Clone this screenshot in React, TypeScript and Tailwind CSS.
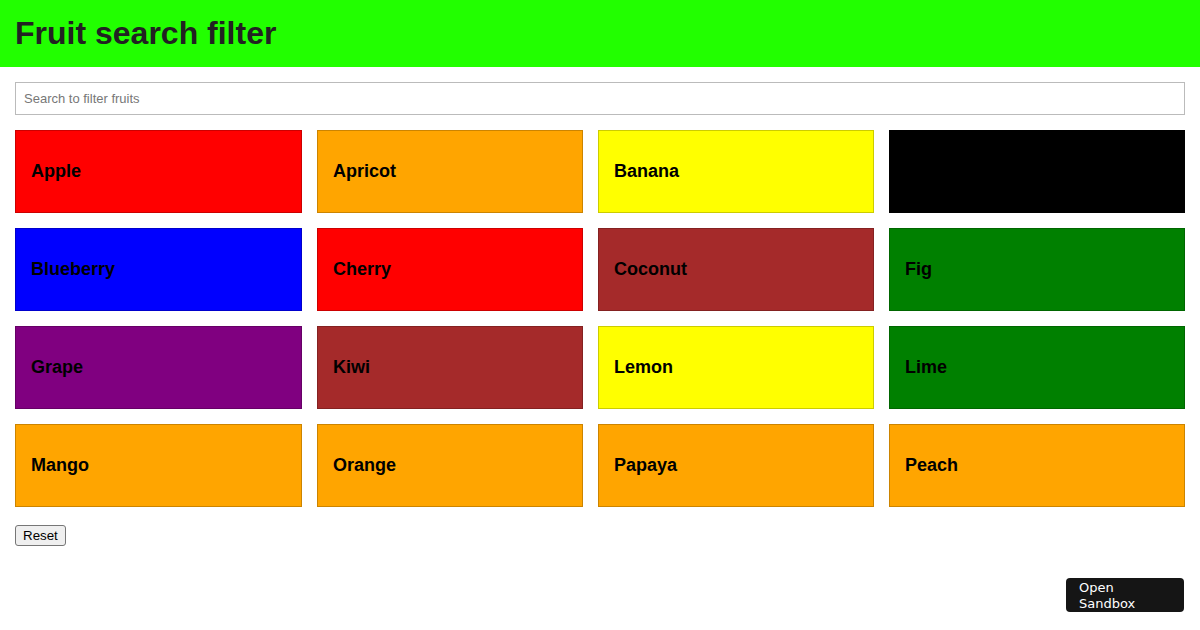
const fruits: { name: string; color: string }[] = [
  { name: 'Apple', color: 'bg-[#ff0000]' },
  { name: 'Apricot', color: 'bg-[#ffa500]' },
  { name: 'Banana', color: 'bg-[#ffff00]' },
  { name: 'Blackberry', color: 'bg-[#000000]' },
  { name: 'Blueberry', color: 'bg-[#0000ff]' },
  { name: 'Cherry', color: 'bg-[#ff0000]' },
  { name: 'Coconut', color: 'bg-[#a52a2a]' },
  { name: 'Fig', color: 'bg-[#008000]' },
  { name: 'Grape', color: 'bg-[#800080]' },
  { name: 'Kiwi', color: 'bg-[#a52a2a]' },
  { name: 'Lemon', color: 'bg-[#ffff00]' },
  { name: 'Lime', color: 'bg-[#008000]' },
  { name: 'Mango', color: 'bg-[#ffa500]' },
  { name: 'Orange', color: 'bg-[#ffa500]' },
  { name: 'Papaya', color: 'bg-[#ffa500]' },
  { name: 'Peach', color: 'bg-[#ffa500]' },
];

export default function App() {
  return (
    <div className="relative h-[630px] w-[1200px] bg-white font-['Liberation_Sans',Arial,sans-serif] text-black">
      <header className="bg-[#22ff00] px-[15px] py-[15px]">
        <h1 className="text-[32px] font-bold leading-[37px] text-[#222]">Fruit search filter</h1>
      </header>
      <main className="px-[15px] pt-[15px]">
        <input
          type="text"
          placeholder="Search to filter fruits"
          className="block h-[33px] w-full border border-[#bbb] px-2 text-[13px] placeholder:text-[#777] outline-none"
        />
        <div className="mt-[15px] grid grid-cols-[287px_266px_276px_296px] gap-[15px]">
          {fruits.map(f => (
            <div
              key={f.name}
              className={`${f.color} flex h-[83px] items-center border border-black/20 px-[15px] text-[18px] font-bold`}
            >
              {f.name}
            </div>
          ))}
        </div>
        <button className="mt-[18px] h-[21px] rounded-[3px] border border-[#767676] bg-[#efefef] px-[7px] text-[13.33px] leading-none">
          Reset
        </button>
      </main>
      <button className="absolute left-[1066px] top-[578px] h-[34px] w-[118px] rounded-[4px] bg-[#151515] pl-[13px] pr-[12px] pt-[1px] text-left font-['DejaVu_Sans',sans-serif] text-[13px] leading-[16px] text-white">
        Open Sandbox
      </button>
    </div>
  );
}
